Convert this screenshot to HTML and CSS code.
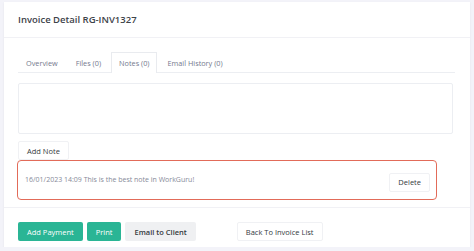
FILE: index.html
```html
<!DOCTYPE html>
<html lang="en">
<head>
    <meta charset="UTF-8">
    <meta name="viewport" content="width=device-width, initial-scale=1.0">
    <title>Invoice Detail</title>
    <link rel="stylesheet" href="styles.css">
</head>
<body>
    <!-- Invoice detail card -->
    <div class="card">
        <div class="card-header">
            <h1>Invoice Detail RG-INV1327</h1>
        </div>

        <div class="card-body">
            <!-- Tabs -->
            <ul class="tabs">
                <li class="tab">Overview</li>
                <li class="tab">Files (0)</li>
                <li class="tab active">Notes (0)</li>
                <li class="tab">Email History (0)</li>
            </ul>

            <div class="tab-content">
                <textarea class="note-input"></textarea>
                <button class="btn btn-light">Add Note</button>

                <div class="note">
                    <p class="note-text">16/01/2023 14:09 This is the best note in WorkGuru!</p>
                    <button class="btn btn-light">Delete</button>
                </div>
            </div>
        </div>

        <div class="card-footer">
            <button class="btn btn-green">Add Payment</button>
            <button class="btn btn-green">Print</button>
            <button class="btn btn-grey">Email to Client</button>
            <button class="btn btn-light back">Back To Invoice List</button>
        </div>
    </div>
</body>
</html>
```

FILE: styles.css
```css
/* page */
body {
    margin: 0;
    padding: 2px 4px 0 4px;
    background-color: #f3f3f9;
    font-family: "Open Sans", Arial, sans-serif;
    color: #495057;
}

.card {
    width: 466px;
    height: 245px;
    background-color: #fff;
    box-shadow: 0 1px 2px rgba(56, 65, 74, 0.08);
}

.card-header {
    height: 35px;
    padding: 0 14px;
    display: flex;
    align-items: center;
    border-bottom: 1px solid #f1f1f5;
}

.card-header h1 {
    margin: 0;
    font-size: 9.5px;
    font-weight: 600;
    color: #3d4349;
}

.card-body {
    padding: 14px 15px 0 14px;
}

/* tabs */
.tabs {
    list-style: none;
    margin: 0;
    padding: 0;
    display: flex;
    border-bottom: 1px solid #eceef2;
}

.tab {
    padding: 5px 7px 4px 7px;
    margin-right: 2px;
    font-size: 7.3px;
    line-height: 10px;
    color: #74788d;
    border: 1px solid transparent;
    border-bottom: none;
}

.tab.active {
    border-color: #e9ebef;
    background-color: #fff;
    margin-bottom: -1px;
    padding-bottom: 5px;
}

.tab-content {
    padding-top: 10px;
}

.note-input {
    display: block;
    width: 435px;
    height: 51px;
    margin: 0;
    padding: 0;
    border: 1px solid #eceef2;
    border-radius: 2px;
    resize: none;
    box-sizing: border-box;
}

/* buttons */
.btn {
    font-family: inherit;
    font-size: 7.5px;
    height: 19px;
    padding: 0 8px;
    border: 1px solid transparent;
    border-radius: 2px;
    cursor: pointer;
}

.btn-light {
    background-color: #fff;
    border-color: #f0f1f4;
    color: #343a40;
}

.btn-green {
    background-color: #2ab595;
    color: #fff;
}

.btn-grey {
    background-color: #eff0f2;
    color: #343a40;
    font-weight: 600;
}

.tab-content > .btn-light {
    margin-top: 7px;
}

/* note row */
.note {
    width: 420px;
    height: 40px;
    margin-left: -1px;
    box-sizing: border-box;
    border: 1.5px solid #e26b59;
    border-radius: 4px;
    display: flex;
    align-items: center;
    justify-content: space-between;
    padding: 0 6px 0 7px;
}

.note-text {
    margin: 0;
    font-size: 7px;
    color: #878a99;
    position: relative;
    top: -1px;
}

.note .btn {
    position: relative;
    top: 2px;
}

/* footer */
.card-footer {
    margin-top: 7px;
    border-top: 1px solid #f1f1f5;
    padding: 14px 14px 0 14px;
    display: flex;
    gap: 4px;
}

.back {
    margin-left: 37px;
}
```
